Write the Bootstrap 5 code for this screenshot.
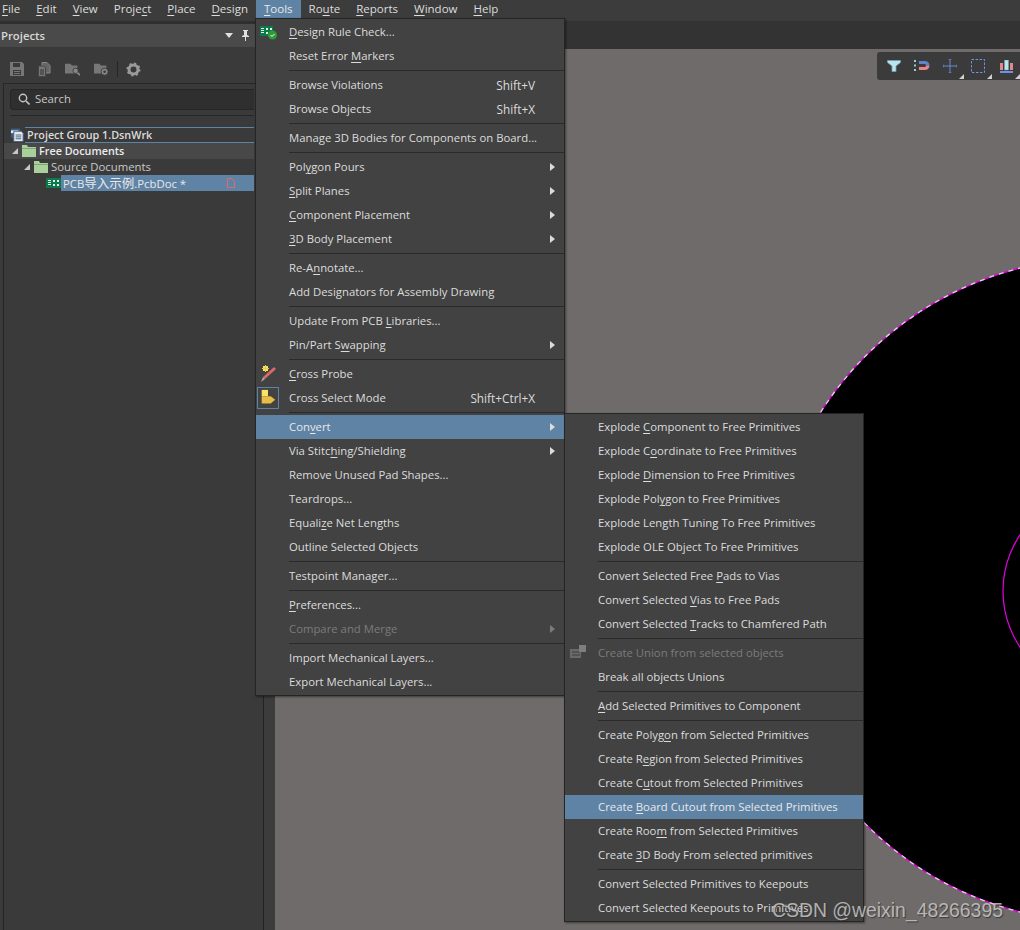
<!DOCTYPE html>
<html lang="en">
<head>
<meta charset="utf-8">
<title>Altium Tools menu</title>
<link rel="stylesheet" href="https://cdn.jsdelivr.net/npm/bootstrap@5.3.0/dist/css/bootstrap.min.css">
<style>
html,body{height:930px;overflow:hidden}
body{background:#393939;color:#dcdcdc;font:11.33px/16px "Open Sans","Noto Sans CJK SC",sans-serif;position:relative;width:1020px}
u{text-underline-offset:2px;text-decoration-thickness:1px}
.menubar{height:21px;background:#3c3c3c;padding:0;font-size:11.5px}
.menubar .top{height:18px;line-height:17px;padding:0 8px;color:#dcdcdc;display:block}
.menubar .top:first-child{padding-left:2px}
.menubar .top.on{background:#5f83a5;color:#e8e8e8}
.workspace{height:909px}
.panel{width:264px;height:909px;background:#3a3a3a;border-right:1px solid #232323;flex:none;padding-top:3px;box-shadow:inset 0 3px 0 #2f2f2f;display:flex;flex-direction:column}
.panel-head{height:23px;background:#4a4a4a;padding:0 13px 0 1px;font-weight:600;color:#d8d8d8;flex:none}
.panel-tools{height:37px;padding:8px 0 0 7px;gap:14px;border-bottom:1px solid #262626;margin-left:3px;flex:none}
.tool-sep{width:1px;height:16px;background:#262626;margin:0 -6px}
.panel-body{margin-left:3px;border-left:1px solid #262626;flex:1;padding-right:9px}
.search{height:21px;margin:5px 0 0 6px;background:#2f2f2f;border:1px solid #262626;border-right:0;border-radius:4px 0 0 4px;color:#c8c8c8;padding:0 0 1px 7px;gap:5px}
.rule{height:1px;background:#262626;margin:5px 0 0 6px}
.tree{padding-top:11px}
.node{height:16px;display:flex;align-items:center;white-space:nowrap}
.node.group{margin-left:-3px;padding-left:9px}
.node.group span{flex:1;border:solid #5f83a5;border-width:1px 0;line-height:14px;padding-left:2px;font-weight:600;font-size:10.8px}
.node.free{background:#484848;padding-left:8px;font-weight:600;color:#ececec;font-size:10.8px}
.node.src{padding-left:20px;color:#c9c9c9}
.node.doc{padding-left:42px}
.node.doc>span{flex:1;background:#5f83a5;height:16px;line-height:15px;color:#e8e8e8;padding-left:2px;display:flex;justify-content:space-between;align-items:center}
.cjk{font-size:12.5px}
.pink{margin-right:19px}
.tri{width:0;height:0;border-style:solid;border-width:0 0 6px 6px;border-color:transparent transparent #c8c8c8 transparent;margin-right:4px}
.fold{margin-right:3px;flex:none}
.canvas-wrap{flex:1;min-width:0;background:#3c3c3c;display:flex;flex-direction:column;padding-left:11px;position:relative}
.tabstrip{height:28px;background:#333;margin-left:-11px;flex:none}
.canvas{flex:1;background:#6f6b6a;position:relative;overflow:hidden}
.board{position:absolute;left:0;top:0;width:745px;height:881px}
.toolbar{position:absolute;right:0;top:3px;width:143px;height:28px;background:#3b3b3b;border-radius:3px 0 0 3px;padding-left:3px}
.tb{position:relative;display:flex;align-items:center;justify-content:center;width:28px;height:28px;flex:none}
.tb.corner:after{content:"";position:absolute;right:0;bottom:1px;border-style:solid;border-width:0 0 5px 5px;border-color:transparent transparent #d0d0d0 transparent}
.dropdown-menu.am{--bs-dropdown-bg:#424242;--bs-dropdown-link-color:#dcdcdc;--bs-dropdown-link-hover-bg:#5f83a5;--bs-dropdown-link-hover-color:#e8e8e8;--bs-dropdown-link-disabled-color:#7b7b7b;--bs-dropdown-divider-bg:#2a2a2a;display:block;position:absolute;padding:1px 0;margin:0;border:1px solid #252525;border-radius:0;min-width:0;box-shadow:1px 1px 2px rgba(0,0,0,.45);z-index:5}
.am .dropdown-item{height:24px;line-height:24px;padding:0 0 0 33px;position:relative;display:flex;font-size:11.33px}
.am .dropdown-item.active,.am .dropdown-item.hot{background:#5f83a5;color:#e8e8e8}
.am .dropdown-item kbd{all:unset;position:absolute;right:29px;top:0;font-size:11.8px}
.am .dropdown-item.sub:after{content:"";position:absolute;right:9px;top:8px;border-style:solid;border-width:4px 0 4px 5px;border-color:transparent transparent transparent #dcdcdc}
.am .dropdown-item.disabled.sub:after{border-left-color:#7b7b7b}
.am .dropdown-divider{margin:2px 0 2px 33px;border-top:1px solid #2a2a2a;opacity:1}
.am .mi{position:absolute;left:3px;top:2px;width:20px;height:20px}
.am .mi.drc{left:4px;top:6px;width:18px;height:14px}
.am .mi.box{border:1px solid #5f83a5;left:1px;top:1px;width:22px;height:22px;padding:1px}
#tools{left:255px;top:18px;width:310px}
#convert{left:564px;top:413px;width:300px;z-index:6}
.wm{position:absolute;left:772px;top:898px;font:19.4px/24px "Liberation Sans",sans-serif;color:#c4c4c4;text-shadow:1px 1px 1px #333;opacity:.85;z-index:9;white-space:nowrap}
</style>
</head>
<body>
<nav class="menubar d-flex align-items-start">
<a class="top text-decoration-none"><u>F</u>ile</a><a class="top text-decoration-none"><u>E</u>dit</a><a class="top text-decoration-none"><u>V</u>iew</a><a class="top text-decoration-none">Proje<u>c</u>t</a><a class="top text-decoration-none"><u>P</u>lace</a><a class="top text-decoration-none"><u>D</u>esign</a><a class="top on text-decoration-none"><u>T</u>ools</a><a class="top text-decoration-none">Ro<u>u</u>te</a><a class="top text-decoration-none"><u>R</u>eports</a><a class="top text-decoration-none"><u>W</u>indow</a><a class="top text-decoration-none"><u>H</u>elp</a>
</nav>
<div class="workspace d-flex">
<aside class="panel">
<div class="panel-head d-flex align-items-center justify-content-between"><span>Projects</span>
<span class="d-flex align-items-center gap-2"><svg width="8" height="5" viewBox="0 0 8 5"><path d="M0 0h8L4 5z" fill="#e0e0e0"/></svg><svg width="9" height="11" viewBox="0 0 9 11"><path d="M2 0h5v1H6v4l2 1v1H5v4H4V7H1V6l2-1V1H2z" fill="#e0e0e0"/></svg></span></div>
<div class="panel-tools d-flex align-items-center">
<svg width="14" height="14" viewBox="0 0 14 14"><path d="M0 0h12l2 2v12H0z" fill="#777"/><path d="M3 1h7v4H3zM3 8h8v5H3z" fill="#3a3a3a"/><path d="M4 9.500h6M4 11.500h6" stroke="#777"/></svg>
<svg width="13" height="15" viewBox="0 0 13 15"><path d="M4 .500h5l3 3v7.500H4z" fill="#666" stroke="#888"/><path d="M.500 4h5l2 2v8.500h-7z" fill="#777" stroke="#444"/><path d="M2 8h4M2 10h4M2 12h4" stroke="#333"/></svg>
<svg width="15" height="15" viewBox="0 0 17 15"><path d="M0 1h6l2 2h6v9H0z" fill="#777"/><circle cx="12" cy="9" r="3" fill="#888" stroke="#3a3a3a"/><path d="M14 11l3 3" stroke="#888" stroke-width="2"/></svg>
<svg width="15" height="15" viewBox="0 0 17 15"><path d="M0 1h6l2 2h6v9H0z" fill="#777"/><circle cx="12" cy="10" r="4" fill="#888" stroke="#3a3a3a"/><circle cx="12" cy="10" r="1.500" fill="#3a3a3a"/></svg>
<span class="tool-sep"></span>
<svg width="15" height="15" viewBox="0 0 15 15"><circle cx="7.500" cy="7.500" r="4.500" fill="none" stroke="#9a9a9a" stroke-width="3"/><circle cx="7.500" cy="7.500" r="6" fill="none" stroke="#9a9a9a" stroke-width="2" stroke-dasharray="2 2.700"/></svg>
</div>
<div class="panel-body">
<div class="search d-flex align-items-center"><svg width="12" height="12" viewBox="0 0 12 12"><circle cx="5" cy="5" r="3.700" fill="none" stroke="#c4c4c4" stroke-width="1.400"/><path d="M8 8l3.500 3.500" stroke="#c4c4c4" stroke-width="1.600"/></svg><span>Search</span></div>
<div class="rule"></div>
<div class="tree">
<div class="node group"><svg width="15" height="16" viewBox="0 0 16 16"><path d="M1 1h10v10H1z" fill="#3a5b80"/><path d="M1 3h8v3H1z" fill="#dfe8f0"/><path d="M4 4h8l2 2v9H4z" fill="#e4e9ee" stroke="#44607f"/><path d="M6 8h6M6 10h6M6 12h6" stroke="#44607f"/></svg><span>Project Group 1.DsnWrk</span></div>
<div class="node free"><i class="tri"></i><svg width="14" height="12" class="fold" viewBox="0 0 14 12"><path d="M0 0h5l1 2h8v10H0z" fill="#a9cf9b"/><path d="M0 3h14v1H0z" fill="#7da777"/></svg><span>Free Documents</span></div>
<div class="node src"><i class="tri"></i><svg width="14" height="12" class="fold" viewBox="0 0 14 12"><path d="M0 0h5l1 2h8v10H0z" fill="#a9cf9b"/><path d="M0 3h14v1H0z" fill="#7da777"/></svg><span>Source Documents</span></div>
<div class="node doc"><svg width="15" height="11" viewBox="0 0 15 11"><path d="M0 0h15v10H0z" fill="#0d7a4c"/><path d="M2 2h3v1H2zM2 4h3v1H2zM2 6h3v1H2zM7 2h2v2H7zM11 2h2v2h-2zM7 6h2v2H7zM11 6h2v2h-2z" fill="#e8f2ea"/></svg><span><span>PCB<span class="cjk">导入示例</span>.PcbDoc *</span><svg class="pink" width="8" height="10" viewBox="0 0 8 10"><path d="M.500.500h4l3 3v6h-7z" fill="none" stroke="#e06b6b"/></svg></span></div>
</div>
</div>
</aside>
<main class="canvas-wrap">
<div class="tabstrip"></div>
<div class="canvas">
<svg class="board" viewBox="275 49 745 881">
<circle cx="1101" cy="590" r="332" fill="#000"/>
<circle cx="1101" cy="590" r="332" fill="none" stroke="#e000e0" stroke-width="1.300"/>
<circle cx="1101" cy="590" r="332" fill="none" stroke="#d8d8d8" stroke-width="1.300" stroke-dasharray="5 5"/>
<circle cx="1104" cy="591" r="101" fill="none" stroke="#e000e0" stroke-width="1.200"/>
</svg>
<div class="toolbar d-flex align-items-center">
<span class="tb"><svg width="14" height="12" viewBox="0 0 14 12"><path d="M.500.500h13v2L9 6v5.500H5V6L.500 2.500z" fill="#bfe3ea" stroke="#6aa4b4" stroke-width=".8"/></svg></span>
<span class="tb"><svg width="16" height="12" viewBox="0 0 16 12"><path d="M0 0h2v2H0zM0 4.500h2v2H0zM0 9h2v2H0z" fill="#9cc"/><path d="M5 1h6a4.500 4.500 0 0 1 4.500 4.500H12A1.500 1.500 0 0 0 11 4H5z" fill="#5d84cf"/><path d="M5 10h6a4.500 4.500 0 0 0 4.500-4.500H12A1.500 1.500 0 0 1 11 7H5z" fill="#e8848b"/></svg></span>
<span class="tb corner"><svg width="14" height="14" viewBox="0 0 14 14"><path d="M0 7h14M7 0v14M0 5.500v3M14 5.500v3M5.500 0h3M5.500 14h3" stroke="#6a8ad2" fill="none"/></svg></span>
<span class="tb corner"><svg width="14" height="14" viewBox="0 0 14 14"><path d="M.500.500h13v13H.500z" stroke="#6e93e6" stroke-dasharray="2.500 1.500" fill="none"/></svg></span>
<span class="tb corner"><svg width="13" height="13" viewBox="0 0 13 13"><path d="M4.500 0h4v10h-4z" fill="#bfe3ea" stroke="#6aa4b4" stroke-width=".6"/><path d="M0 3h3v7H0zM10 3h3v7h-3z" fill="#e8848b"/><path d="M0 11h13v2H0z" fill="#6e93e6"/></svg></span>
</div>
</div>
</main>
</div>

<div class="dropdown-menu am show" id="tools">
<a class="dropdown-item"><svg class="mi drc" viewBox="0 0 18 14"><path d="M0 0h13v10H0z" fill="#0d7a4c"/><path d="M1 2h3v1H1zM1 4h3v1H1zM1 6h3v1H1zM6 2h2v2H6zM10 2h2v2h-2zM6 6h2v2H6z" fill="#dff0e4"/><circle cx="12.500" cy="9" r="4.500" fill="#2e9a3a"/><path d="M10.500 9l1.500 1.500L14.500 8" stroke="#fff" fill="none"/></svg><span><u>D</u>esign Rule Check...</span></a>
<a class="dropdown-item"><span>Reset Error <u>M</u>arkers</span></a>
<hr class="dropdown-divider">
<a class="dropdown-item"><span>Browse Violations</span><kbd>Shift+V</kbd></a>
<a class="dropdown-item"><span>Browse Objects</span><kbd>Shift+X</kbd></a>
<hr class="dropdown-divider">
<a class="dropdown-item"><span>Manage 3D Bodies for Components on Board...</span></a>
<hr class="dropdown-divider">
<a class="dropdown-item sub"><span>Pol<u>y</u>gon Pours</span></a>
<a class="dropdown-item sub"><span><u>S</u>plit Planes</span></a>
<a class="dropdown-item sub"><span><u>C</u>omponent Placement</span></a>
<a class="dropdown-item sub"><span><u>3</u>D Body Placement</span></a>
<hr class="dropdown-divider">
<a class="dropdown-item"><span>Re-A<u>n</u>notate...</span></a>
<a class="dropdown-item"><span>Add Designators for Assembly Drawing</span></a>
<hr class="dropdown-divider">
<a class="dropdown-item"><span>Update From PCB <u>L</u>ibraries...</span></a>
<a class="dropdown-item sub"><span>Pin/Part S<u>w</u>apping</span></a>
<hr class="dropdown-divider">
<a class="dropdown-item"><svg class="mi" viewBox="0 0 20 20"><path d="M15 3l2 2L6 15l-2-2z" fill="#d86a6a"/><path d="M4 13l2 2-4 3z" fill="#aaa"/><path d="M4 2h5v5H4z" fill="#f7e26a"/><path d="M3 4.500h7M6.500 1v7" stroke="#f3c93c"/></svg><span><u>C</u>ross Probe</span></a>
<a class="dropdown-item"><span class="mi box d-block"><svg class="d-block" width="18" height="18" viewBox="0 0 20 20"><path d="M3 1h7v7H3z" fill="#f7e26a"/><path d="M3 8h10l5 4-5 4H3z" fill="#e8bd45"/></svg></span><span>Cross Select Mode</span><kbd>Shift+Ctrl+X</kbd></a>
<hr class="dropdown-divider">
<a class="dropdown-item sub active"><span>Con<u>v</u>ert</span></a>
<a class="dropdown-item sub"><span>Via Stitc<u>h</u>ing/Shielding</span></a>
<a class="dropdown-item"><span>Remove Unused Pad Shapes...</span></a>
<a class="dropdown-item"><span>Teardrops...</span></a>
<a class="dropdown-item"><span>Equali<u>z</u>e Net Lengths</span></a>
<a class="dropdown-item"><span>Outline Selected Objects</span></a>
<hr class="dropdown-divider">
<a class="dropdown-item"><span>Testpoint Manager...</span></a>
<hr class="dropdown-divider">
<a class="dropdown-item"><span><u>P</u>references...</span></a>
<a class="dropdown-item sub disabled"><span>Compare and Merge</span></a>
<hr class="dropdown-divider">
<a class="dropdown-item"><span>Import Mechanical Layers...</span></a>
<a class="dropdown-item"><span>Export Mechanical Layers...</span></a>
</div>

<div class="dropdown-menu am show" id="convert">
<a class="dropdown-item"><span>Explode <u>C</u>omponent to Free Primitives</span></a>
<a class="dropdown-item"><span>Explode C<u>o</u>ordinate to Free Primitives</span></a>
<a class="dropdown-item"><span>Explode <u>D</u>imension to Free Primitives</span></a>
<a class="dropdown-item"><span>Explode Pol<u>y</u>gon to Free Primitives</span></a>
<a class="dropdown-item"><span>Explode Length Tuning To Free Primitives</span></a>
<a class="dropdown-item"><span>Explode OLE Object To Free Primitives</span></a>
<hr class="dropdown-divider">
<a class="dropdown-item"><span>Convert Selected Free <u>P</u>ads to Vias</span></a>
<a class="dropdown-item"><span>Convert Selected <u>V</u>ias to Free Pads</span></a>
<a class="dropdown-item"><span>Convert Selected <u>T</u>racks to Chamfered Path</span></a>
<hr class="dropdown-divider">
<a class="dropdown-item disabled"><svg class="mi" viewBox="0 0 20 20"><path d="M2 6h11v9H2z" fill="#6a6a6a"/><path d="M4 9h8M4 12h8" stroke="#3d3d3d"/><path d="M11 2h7v7h-7z" fill="#7e7e7e"/></svg><span>Create Union from selected objects</span></a>
<a class="dropdown-item"><span>Break all objects Unions</span></a>
<hr class="dropdown-divider">
<a class="dropdown-item"><span><u>A</u>dd Selected Primitives to Component</span></a>
<hr class="dropdown-divider">
<a class="dropdown-item"><span>Create Polyg<u>o</u>n from Selected Primitives</span></a>
<a class="dropdown-item"><span>Create R<u>e</u>gion from Selected Primitives</span></a>
<a class="dropdown-item"><span>Create C<u>u</u>tout from Selected Primitives</span></a>
<a class="dropdown-item hot"><span>Create <u>B</u>oard Cutout from Selected Primitives</span></a>
<a class="dropdown-item"><span>Create Roo<u>m</u> from Selected Primitives</span></a>
<a class="dropdown-item"><span>Create <u>3</u>D Body From selected primitives</span></a>
<hr class="dropdown-divider">
<a class="dropdown-item"><span>Convert Selected Primitives to Keepouts</span></a>
<a class="dropdown-item"><span>Convert Selected Keepouts to Primitives</span></a>
</div>

<div class="wm">CSDN @weixin_48266395</div>
</body>
</html>
